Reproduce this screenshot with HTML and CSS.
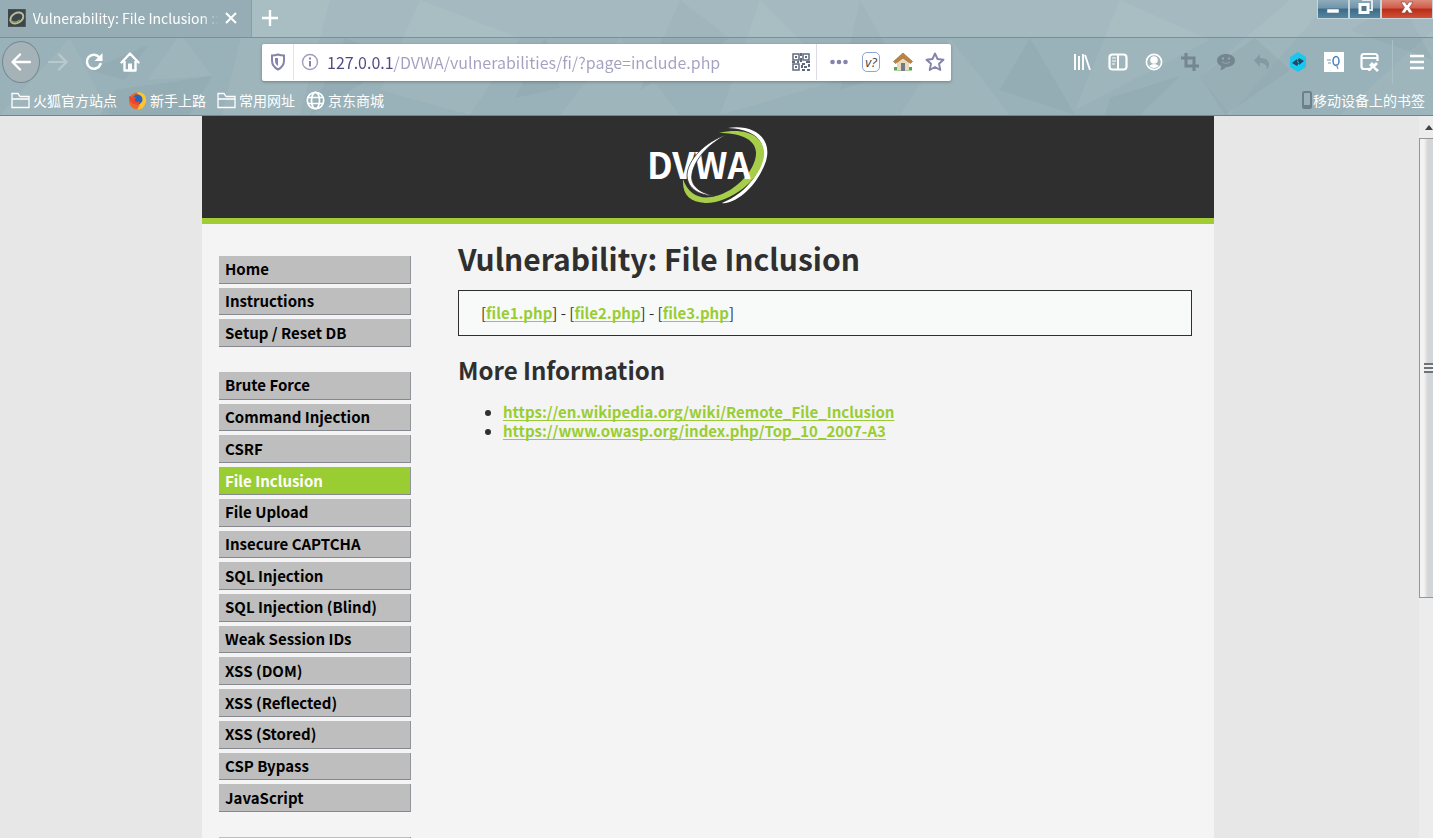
FILE: index.html
```html
<!DOCTYPE html>
<html lang="en">
<head>
<meta charset="UTF-8">
<meta name="viewport" content="width=device-width, initial-scale=1.0">
<title>Vulnerability: File Inclusion :: DVWA</title>
<link rel="stylesheet" href="styles.css">
</head>
<body>

<div class="browser">
    <svg class="theme" viewBox="0 0 1433 115" preserveAspectRatio="none" aria-hidden="true">
        <g fill="#ffffff" fill-opacity="0.05">
            <path d="M70 38L110 115H0z"/>
            <path d="M180 34L212 76L148 80z"/>
            <path d="M250 0L222 115L300 115L330 0z"/>
            <path d="M420 0L520 38L470 115L380 90z"/>
            <path d="M620 38L560 115H680z"/>
            <path d="M760 0L840 80L720 115z"/>
            <path d="M950 38L1010 115H900z"/>
            <path d="M1120 0L1210 40L1075 110z"/>
            <path d="M1290 0L1330 0L1230 115L1200 76z"/>
            <path d="M1433 30V115H1340z"/>
        </g>
        <g fill="#5f7f8a" fill-opacity="0.09">
            <path d="M130 0L60 38L20 0z"/>
            <path d="M148 45L125 80L90 70z"/>
            <path d="M212 76L115 90L100 115H190z"/>
            <path d="M345 38L400 60L310 115z"/>
            <path d="M545 38L560 88L515 98z"/>
            <path d="M680 0L730 38L640 90z"/>
            <path d="M860 0L900 70L840 90z"/>
            <path d="M1030 38L1075 115L1000 90z"/>
            <path d="M1255 38L1200 76L1225 115L1290 70z"/>
            <path d="M1180 76L1140 115H1105L1110 98z"/>
            <path d="M1400 0L1433 60L1350 30z"/>
        </g>
    </svg>

    <div class="tabs">
        <div class="tab">
            <svg width="18" height="18" viewBox="0 0 18 18"><path fill="#3c4548" d="M0 0h18v18H0z"/><ellipse cx="9" cy="9" rx="7" ry="5" transform="rotate(-30 9 9)" fill="none" stroke="#b8bda0" stroke-width="2"/><path d="M3 12q4 3 9-1" stroke="#88a05a" stroke-width="1.5" fill="none"/></svg>
            <span class="tab-title">Vulnerability: File Inclusion ::</span>
            <button class="icon-btn tab-close" aria-label="Close tab"><svg width="12" height="12" viewBox="0 0 12 12"><path d="M1 1l10 10M11 1L1 11" stroke="#fff" stroke-width="2"/></svg></button>
        </div>
        <button class="icon-btn new-tab" aria-label="New tab"><svg width="16" height="16" viewBox="0 0 16 16"><path d="M8 0v16M0 8h16" stroke="#fff" stroke-width="2.4"/></svg></button>
        <div class="window-buttons">
            <button class="win" aria-label="Minimize"><svg width="14" height="18" viewBox="0 0 14 18"><path d="M1 9h12v4H1z" fill="#fff" stroke="#5b7e93" stroke-width=".6"/></svg></button>
            <button class="win" aria-label="Restore"><svg width="16" height="18" viewBox="0 0 16 18"><path d="M5 0h10v10h-3" fill="none" stroke="#e3e9ec" stroke-width="2"/><path d="M3 4.500h8v8H3z" fill="#55778b" stroke="#fff" stroke-width="3"/></svg></button>
            <button class="win win-close" aria-label="Close"><svg width="14" height="18" viewBox="0 0 14 18"><path d="M1 2h4l2 3 2-3h4L9.500 7.500 13 13H9L7 10l-2 3H1l3.500-5.500z" fill="#fff" stroke="#7d3a30" stroke-width=".6"/></svg></button>
        </div>
    </div>

    <div class="toolbar">
        <div class="nav-buttons">
            <button class="icon-btn back" aria-label="Back"><svg width="20" height="18" viewBox="0 0 20 18"><path d="M19 9H2M9 1.500L1.500 9 9 16.500" fill="none" stroke="#fff" stroke-width="2.400" stroke-linecap="round" stroke-linejoin="round"/></svg></button>
            <button class="icon-btn" aria-label="Forward"><svg width="20" height="18" viewBox="0 0 20 18"><path d="M1 9h17M11 1.500L18.500 9 11 16.500" fill="none" stroke="#b9c9ce" stroke-width="2.200" stroke-linecap="round" stroke-linejoin="round"/></svg></button>
            <button class="icon-btn" aria-label="Reload"><svg width="20" height="20" viewBox="0 0 20 20"><path d="M15.500 5.500A7 7 0 1 0 16.500 12" fill="none" stroke="#fff" stroke-width="2.500" stroke-linecap="round"/><path d="M18.500 1v8h-8z" fill="#fff"/></svg></button>
            <button class="icon-btn" aria-label="Home"><svg width="20" height="20" viewBox="0 0 20 20"><path d="M1.500 10.500L10 1.500l8.500 9M4.500 9v9.500h11V9" fill="none" stroke="#fff" stroke-width="2.400" stroke-linecap="round" stroke-linejoin="round"/><path d="M8 11.500h4V18H8z" fill="#fff"/></svg></button>
        </div>

        <div class="urlbar">
            <button class="icon-btn shield" aria-label="Tracking protection"><svg width="16" height="18" viewBox="0 0 16 18"><path d="M8 1.500q3 1 6 1v5q0 6-6 9-6-3-6-9v-5q3 0 6-1z" fill="none" stroke="#8583ab" stroke-width="2"/><path d="M8 5v8q-3-2-3-5.500V5z" fill="#8583ab"/></svg></button>
            <button class="icon-btn info" aria-label="Site information"><svg width="18" height="18" viewBox="0 0 18 18"><circle cx="9" cy="9" r="7.500" fill="none" stroke="#a09ebd" stroke-width="1.400"/><path d="M9 8v5.500M9 4.500v2" stroke="#8583ab" stroke-width="2"/></svg></button>
            <input class="url" type="text" aria-label="Address" value="127.0.0.1/DVWA/vulnerabilities/fi/?page=include.php">
            <button class="icon-btn qr" aria-label="QR code"><svg width="18" height="18" viewBox="0 0 18 18"><g fill="none" stroke="#5f6b7b" stroke-width="1.500"><path d="M1 1h6v6H1zM11 1h6v6h-6zM1 11h6v6H1z"/></g><path fill="#5f6b7b" d="M3 3h2v2H3zM13 3h2v2h-2zM3 13h2v2H3zM8 0h2v3H8zM8 5h2v4H8zM0 8h3v2H0zM5 8h2v2H5zM10 10h3v2h-3zM14 8h4v2h-4zM9 12h2v3H9zM12 13h3v2h-3zM16 11h2v3h-2zM10 16h3v2h-3zM15 16h3v2h-3z"/></svg></button>
            <button class="icon-btn" aria-label="Page actions"><svg width="18" height="6" viewBox="0 0 18 6"><g fill="#8583ab"><circle cx="2.500" cy="3" r="2.300"/><circle cx="9" cy="3" r="2.300"/><circle cx="15.500" cy="3" r="2.300"/></g></svg></button>
            <button class="icon-btn" aria-label="Version check"><span class="version">v?</span></button>
            <button class="icon-btn" aria-label="Home page"><svg width="20" height="20" viewBox="0 0 20 20"><path d="M1 15h18v3.500H1z" fill="#56a64b"/><path d="M4 9l6-5 6 5v9H4z" fill="#ead9bd"/><path d="M8 11h4v8H8z" fill="#747a88"/><path d="M10 1l9.500 8.500-2 2L10 6l-7.500 5.500-2-2z" fill="#bd8441" stroke="#8e642f" stroke-width=".6"/></svg></button>
            <button class="icon-btn" aria-label="Bookmark this page"><svg width="20" height="20" viewBox="0 0 20 20"><path d="M10 1.500l2.500 5.500 6 .700-4.500 4 1.300 6.300L10 15l-5.300 3L6 11.700l-4.500-4 6-.700z" fill="none" stroke="#8583ab" stroke-width="1.900" stroke-linejoin="round"/></svg></button>
        </div>

        <div class="tools">
            <button class="icon-btn" aria-label="Library"><svg width="18" height="18" viewBox="0 0 18 18"><path d="M2 1v16M6 3v14M10 1v16M12 2l5 15" stroke="#fff" stroke-width="1.900"/></svg></button>
            <button class="icon-btn" aria-label="Sidebars"><svg width="20" height="18" viewBox="0 0 20 18"><rect x="1.500" y="1.500" width="17" height="15" rx="3" fill="none" stroke="#fff" stroke-width="2.200"/><path d="M10 2v14" stroke="#fff" stroke-width="2"/><path d="M4 5h4M4 8h4M4 11h3" stroke="#fff"/></svg></button>
            <button class="icon-btn" aria-label="Account"><svg width="18" height="18" viewBox="0 0 18 18"><circle cx="9" cy="9" r="7.600" fill="none" stroke="#fff" stroke-width="1.600"/><circle cx="9" cy="7" r="3.800" fill="#fff"/><path d="M4 13q5-4 10 0-5 4-10 0z" fill="#fff"/></svg></button>
            <button class="icon-btn" aria-label="Screenshot"><svg width="18" height="18" viewBox="0 0 18 18"><path d="M5 0v13h13M0 5h13v13" fill="none" stroke="#748790" stroke-width="3"/></svg></button>
            <button class="icon-btn" aria-label="Comments"><svg width="20" height="18" viewBox="0 0 20 18"><path d="M10 1C15 1 19 3.500 19 7.500 19 11.500 15 14 10 14 9 15.500 7 17 4 17 5 16 5.500 14.500 5 13 2.500 12 1 10 1 7.500 1 3.500 5 1 10 1z" fill="#748790"/><g fill="#a3b5bb"><circle cx="7" cy="5.500" r="1"/><circle cx="13" cy="5.500" r="1"/></g><path d="M6 9q4 3 8 0" fill="none" stroke="#94a7ae"/></svg></button>
            <button class="icon-btn" aria-label="Undo"><svg width="18" height="18" viewBox="0 0 18 18"><path d="M7 1v4C14 5 19 9 14 17 14 12 12 10 7 10v4L1 7.500z" fill="#849aa2"/></svg></button>
            <button class="icon-btn" aria-label="Proxy"><svg width="18" height="20" viewBox="0 0 18 20"><path d="M9 0l8 5v10l-8 5-8-5V5z" fill="#1cc7ee"/><path d="M3 11l5-4v3l2 1-2 3zM15 9l-5 4v-3L8 9l2-3z" fill="#20485e"/></svg></button>
            <button class="icon-btn" aria-label="Quick search"><svg width="20" height="20" viewBox="0 0 20 20"><path fill="#fff" d="M0 0h20v20H0z"/><ellipse cx="12" cy="9" rx="3" ry="4.500" fill="none" stroke="#4681be" stroke-width="1.500"/><path d="M12 12l2 5M3 8h4M4 11h3" stroke="#7c95ac" stroke-width="1.200"/></svg></button>
            <button class="icon-btn" aria-label="Page editor"><svg width="20" height="20" viewBox="0 0 20 20"><path d="M9 17H4Q1.500 17 1.500 14.500v-10Q1.500 2 4 2h11q2.500 0 2.500 2.500V9M2 6h15" fill="none" stroke="#fff" stroke-width="2.200"/><path d="M9 13l3-3 2 2 2-2 2 2-3 3 4 3-2 2-4-4-3 3H8l1-3 2-1z" fill="#fff"/></svg></button>
        </div>
        <button class="icon-btn menu-btn" aria-label="Open menu"><svg width="14" height="16" viewBox="0 0 14 16"><path d="M0 2h14M0 8h14M0 14h14" stroke="#fff" stroke-width="2.400"/></svg></button>
    </div>

    <div class="bookmarks">
        <a href="#"><svg width="19" height="17" viewBox="0 0 19 17"><path d="M1 15.500V1.500h6l2 3h9v11zM1 7h17" fill="none" stroke="#fff" stroke-width="1.300"/></svg>火狐官方站点</a>
        <a href="#"><svg width="19" height="19" viewBox="0 0 19 19"><circle cx="9.500" cy="10" r="8.500" fill="#f2652a"/><path d="M9 1q10 0 9 10-2 8-9 7.500Q15 13 9 1z" fill="#fdc52f"/><circle cx="9.500" cy="8.500" r="5" fill="#2a63ba"/><path d="M1 5l3 1q3-1 4 1-2 1-1 3 2 2 5 0-1 5-6 3-5-2-5-8z" fill="#ee472d"/></svg>新手上路</a>
        <a href="#"><svg width="19" height="17" viewBox="0 0 19 17"><path d="M1 15.500V1.500h6l2 3h9v11zM1 7h17" fill="none" stroke="#fff" stroke-width="1.300"/></svg>常用网址</a>
        <a href="#"><svg width="19" height="19" viewBox="0 0 19 19"><g fill="none" stroke="#fff" stroke-width="1.700"><circle cx="9.500" cy="9.500" r="8.200"/><ellipse cx="9.500" cy="9.500" rx="4" ry="8.200"/><path d="M2 6.500h15M2 12.500h15"/></g></svg>京东商城</a>
        <a href="#" class="mobile"><svg width="10" height="18" viewBox="0 0 10 18"><rect x="1" y="1" width="8" height="16" rx="1.500" fill="none" stroke="#6d8089" stroke-width="2"/><path d="M1 14h8v3H1z" fill="#6d8089"/></svg>移动设备上的书签</a>
    </div>
</div>

<div class="viewport">
    <div class="page">
        <div id="container">
            <div class="header">
                <svg class="logo" viewBox="0 0 120 80" role="img" aria-label="DVWA">
                    <path d="M80 2C104-2 125 11 118 35 108 64 84 79 74 77 102 66 117 40 115 23 113 9 99 3 80 2z" fill="#fff"/>
                    <path d="M71 7C101 0 118 13 116 30 113 55 80 78 57 77 42 76 34 69 35 53 40 68 51 73 63 71 84 69 109 45 108 26 107 12 90 7 71 7z" fill="#a6ce4a"/>
                    <text x="-1" y="53" class="logo-text">DVWA</text>
                    <path d="M78 9C58 15 39 34 39 50 40 63 51 69 66 70 49 66 42 58 44 48 47 32 61 18 78 9z" fill="#fff" stroke="#2f2f2f" stroke-width=".8"/>
                </svg>
            </div>

            <div class="columns">
                <div class="main-menu">
                    <ul class="menu-short">
                        <li><a href="#">Home</a></li>
                        <li><a href="#">Instructions</a></li>
                        <li><a href="#">Setup / Reset DB</a></li>
                    </ul>
                    <ul class="menu-long">
                        <li><a href="#">Brute Force</a></li>
                        <li><a href="#">Command Injection</a></li>
                        <li><a href="#">CSRF</a></li>
                        <li class="selected"><a href="#">File Inclusion</a></li>
                        <li><a href="#">File Upload</a></li>
                        <li><a href="#">Insecure CAPTCHA</a></li>
                        <li><a href="#">SQL Injection</a></li>
                        <li><a href="#">SQL Injection (Blind)</a></li>
                        <li><a href="#">Weak Session IDs</a></li>
                        <li><a href="#">XSS (DOM)</a></li>
                        <li><a href="#">XSS (Reflected)</a></li>
                        <li><a href="#">XSS (Stored)</a></li>
                        <li><a href="#">CSP Bypass</a></li>
                        <li><a href="#">JavaScript</a></li>
                    </ul>
                    <ul class="menu-next">
                        <li></li>
                    </ul>
                </div>

                <div class="main-body">
                    <h1>Vulnerability: File Inclusion</h1>
                    <div class="code-area">
                        [<a href="#">file1.php</a>] - [<a href="#">file2.php</a>] - [<a href="#">file3.php</a>]
                    </div>
                    <h2>More Information</h2>
                    <ul>
                        <li><a href="#">https://en.wikipedia.org/wiki/Remote_File_Inclusion</a></li>
                        <li><a href="#">https://www.owasp.org/index.php/Top_10_2007-A3</a></li>
                    </ul>
                </div>
            </div>
        </div>
    </div>

    <div class="scrollbar">
        <svg class="arrow" width="8" height="5" viewBox="0 0 8 5"><path d="M4 0l4 5H0z" fill="#444"/></svg>
        <div class="thumb"><span class="grip"></span></div>
    </div>
</div>

</body>
</html>
```

FILE: styles.css
```css
* {
    box-sizing: border-box;
}
body {
    margin: 0;
    height: 100vh;
    overflow: hidden;
    display: flex;
    flex-direction: column;
    font-family: "Noto Sans CJK SC", "Noto Sans", sans-serif;
    font-size: 15px;
    background-color: #e7e7e7;
}
ul {
    list-style: none;
    margin: 0;
    padding: 0;
}

/* browser window */
.browser {
    position: relative;
    flex: none;
    background-color: #99b1b8;
    border-bottom: 1px solid #6f858f;
}
.theme {
    position: absolute;
    top: 0;
    left: 0;
    width: 100%;
    height: 100%;
}
.tabs,
.toolbar,
.bookmarks {
    position: relative;
    display: flex;
    align-items: center;
}
.icon-btn {
    display: flex;
    align-items: center;
    justify-content: center;
    flex: none;
    width: 36px;
    height: 36px;
    padding: 0;
    border: none;
    background: none;
}
.tabs {
    height: 38px;
    padding-bottom: 2px;
    border-bottom: 1px solid #78909a;
    background-color: rgba(255, 255, 255, 0.12);
}
.tab {
    display: flex;
    align-items: center;
    align-self: flex-start;
    flex: none;
    width: 252px;
    height: 37px;
    padding: 0 8px 2px;
    border-right: 1px solid #879fa8;
    background-color: #96adb5;
}
.tab-title {
    flex: 1;
    margin-left: 7px;
    white-space: nowrap;
    color: #fff;
    font-size: 14px;
    -webkit-mask-image: linear-gradient(to right, #000 90%, transparent);
    mask-image: linear-gradient(to right, #000 90%, transparent);
}
.tab-close {
    width: 24px;
}
.window-buttons {
    display: flex;
    align-self: flex-start;
    margin-left: auto;
}
.win {
    display: flex;
    justify-content: center;
    width: 32px;
    height: 19px;
    padding: 0;
    border: 1px solid #c5d6dc;
    border-top: none;
    background: linear-gradient(#8eacbc, #6f94a9 45%, #3d6a86 50%, #5587a2);
}
.win-close {
    width: 52px;
    background: linear-gradient(#dc8b7d, #cf5b48 45%, #b92b17 50%, #d25039);
}

.toolbar {
    height: 49px;
    padding-bottom: 1px;
}
.nav-buttons,
.tools {
    display: flex;
    align-items: center;
}
.nav-buttons {
    padding-left: 2px;
}
.back {
    width: 38px;
    height: 42px;
    border: 1px solid #75878f;
    border-radius: 50%;
    background-color: #a5b3b8;
}
.urlbar {
    display: flex;
    align-items: center;
    flex: 1;
    height: 37px;
    margin: 0 113px 0 114px;
    border-radius: 2px;
    background-color: #fff;
    box-shadow: 0 1px 3px rgba(60, 80, 90, 0.5);
}
.urlbar .icon-btn {
    width: 32px;
}
.urlbar .shield {
    border-right: 1px solid #e3e3ea;
}
.url {
    flex: 1;
    min-width: 0;
    height: 30px;
    padding: 0 1px;
    border: none;
    outline: none;
    font-family: inherit;
    font-size: 16px;
    color: transparent;
    background: linear-gradient(to right, #4c4980 68px, #a3a1c0 68px);
    -webkit-background-clip: text;
    background-clip: text;
}
.urlbar .qr {
    border-right: 1px solid #dcdce6;
    margin-right: 6px;
}
.version {
    width: 18px;
    height: 20px;
    border: 1px solid #8ea5d8;
    border-radius: 5px;
    font-family: "Open Sans", sans-serif;
    font-size: 13px;
    font-style: italic;
    line-height: 18px;
    color: #444;
}
.menu-btn {
    width: 41px;
    height: 44px;
    padding-left: 8px;
    margin-left: 4px;
    border-left: 1px solid #abc0c6;
}

.bookmarks {
    height: 28px;
    gap: 11px;
    padding: 0 8px 2px 11px;
}
.bookmarks a {
    display: flex;
    align-items: center;
    gap: 3px;
    color: #fff;
    font-size: 14px;
    text-decoration: none;
}
.bookmarks .mobile {
    margin-left: auto;
    gap: 1px;
}

/* page */
.viewport {
    display: flex;
    flex: 1;
    min-height: 0;
}
.page {
    flex: 1;
    overflow: hidden;
}
#container {
    max-width: 1012px;
    min-height: 100%;
    margin: 0 auto;
    background-color: #f4f4f4;
}
.header {
    height: 108px;
    padding-top: 10px;
    text-align: center;
    background-color: #2f2f2f;
    border-bottom: 6px solid #a1cc33;
}
.logo {
    width: 120px;
    height: 80px;
    overflow: visible;
}
.logo-text {
    font-size: 36px;
    font-weight: bold;
    fill: #fff;
}
.columns {
    display: flex;
}
.main-menu {
    flex: none;
    width: 209px;
    padding: 32px 0 0 17px;
}
.main-menu ul {
    display: flex;
    flex-direction: column;
    gap: 4px;
    margin-bottom: 25px;
}
.menu-short {
    height: 91px;
}
.menu-long {
    height: 440px;
}
.menu-next {
    height: 28px;
}
.main-menu li {
    display: flex;
    align-items: center;
    flex: 1;
    padding-left: 6px;
    background-color: #bebebe;
    border-right: 1px solid #8f959b;
    border-bottom: 1px solid #85898f;
}
.main-menu a {
    color: #000;
    font-weight: bold;
    line-height: 20px;
    text-decoration: none;
}
.main-menu .selected {
    background-color: #9acd32;
}
.main-menu .selected a {
    color: #fff;
}
.main-body {
    flex: 1;
    padding: 10px 22px 0 47px;
    color: #2f2f2f;
}
h1 {
    margin: 0 0 8px;
    font-size: 30px;
    line-height: 48px;
}
h2 {
    margin: 14px 0 12px;
    font-size: 24px;
    line-height: 40px;
}
.code-area {
    padding: 11px 22px;
    line-height: 22px;
    border: 1px solid #2f2f2f;
    background-color: #f8fafa;
}
.main-body a {
    color: #9acd32;
    font-weight: bold;
    text-decoration: underline 1px;
    text-decoration-skip-ink: none;
    text-underline-offset: 2px;
}
.main-body ul {
    list-style: disc;
    padding-left: 45px;
}
.main-body li {
    line-height: 19px;
}

/* scrollbar */
.scrollbar {
    display: flex;
    flex-direction: column;
    align-items: flex-end;
    flex: none;
    width: 17px;
    background-color: #ececec;
    border-left: 3px solid #e7e7e7;
}
.arrow {
    margin: 9px 0 8px;
}
.thumb {
    display: flex;
    align-items: center;
    justify-content: flex-end;
    width: 14px;
    height: 460px;
    border: 1px solid #979797;
    border-right: none;
    background: linear-gradient(to right, #f3f3f3 30%, #d3d6d9 60%);
}
.grip {
    width: 9px;
    height: 10px;
    background: repeating-linear-gradient(#6f7276 0, #6f7276 2px, #eeeeee 2px, #eeeeee 4px);
}
```
